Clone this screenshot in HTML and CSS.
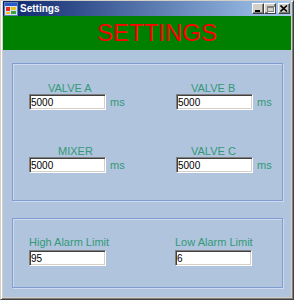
FILE: index.html
```html
<!DOCTYPE html>
<html>
<head>
<meta charset="utf-8">
<link rel="stylesheet" href="styles.css">
</head>
<body>
<div class="window">
  <div class="titlebar">
    <svg class="appicon" width="14" height="14" viewBox="0 0 14 14">
      <rect x="0.5" y="0.5" width="13" height="13" fill="#d8e4f4" stroke="#5a7fb8"/>
      <rect x="1" y="1" width="12" height="3" fill="#2a5ac8"/>
      <rect x="2" y="5" width="4" height="4" fill="#e03020"/>
      <rect x="7" y="5" width="5" height="3" fill="#f0c020"/>
      <rect x="2" y="10" width="4" height="2" fill="#f0c020"/>
      <rect x="7" y="9" width="5" height="3" fill="#40a040"/>
    </svg>
    <span class="title">Settings</span>
    <div class="caption-btns">
      <span class="cbtn"><span class="g-min"></span></span>
      <span class="cbtn"><span class="g-max"></span></span>
      <span class="cbtn cbtn-close"><svg width="8" height="7" viewBox="0 0 8 7"><path d="M0.5 0.5L7 6.5M7 0.5L0.5 6.5" stroke="#000" stroke-width="1.6"/></svg></span>
    </div>
  </div>
  <div class="banner">SETTINGS</div>
  <div class="client">
    <div class="group group-valves">
      <div class="field">
        <span class="lbl lbl-a">VALVE A</span>
        <div class="inrow"><input class="tb" value="5000"><span class="unit">ms</span></div>
      </div>
      <div class="field">
        <span class="lbl lbl-b">VALVE B</span>
        <div class="inrow"><input class="tb" value="5000"><span class="unit">ms</span></div>
      </div>
      <div class="field">
        <span class="lbl lbl-mixer">MIXER</span>
        <div class="inrow"><input class="tb" value="5000"><span class="unit">ms</span></div>
      </div>
      <div class="field">
        <span class="lbl lbl-c">VALVE C</span>
        <div class="inrow"><input class="tb" value="5000"><span class="unit">ms</span></div>
      </div>
    </div>
    <div class="group group-alarms">
      <div class="field">
        <span class="lbl lbl-alarm">High Alarm Limit</span>
        <input class="tb" value="95">
      </div>
      <div class="field">
        <span class="lbl lbl-alarm">Low Alarm Limit</span>
        <input class="tb" value="6">
      </div>
    </div>
  </div>
</div>
</body>
</html>
```

FILE: styles.css
```css
html, body {
  margin: 0;
  padding: 0;
  background: #ffffff;
}

.window {
  width: 294px;
  height: 300px;
  box-sizing: border-box;
  background: #d4d0c8;
  border: 1px solid;
  border-color: #d4d0c8 #404040 #404040 #d4d0c8;
  box-shadow: inset 1px 1px 0 #ffffff, inset -1px -1px 0 #808080;
  padding: 0 2px 2px 2px;
  display: flex;
  flex-direction: column;
  font-family: "Liberation Sans", Arial, sans-serif;
}

.titlebar {
  height: 15px;
  flex: none;
  display: flex;
  align-items: center;
  background: linear-gradient(to right, #0a246a, #a6caf0);
}

.appicon {
  margin-left: 1px;
  flex: none;
}

.title {
  margin-left: 2px;
  color: #ffffff;
  font-weight: bold;
  font-size: 10px;
  line-height: 15px;
}

.caption-btns {
  margin-left: auto;
  margin-right: 1px;
  display: flex;
  align-items: center;
}

.cbtn {
  width: 12px;
  height: 11px;
  box-sizing: border-box;
  background: #d4d0c8;
  border: 1px solid;
  border-color: #ffffff #404040 #404040 #ffffff;
  box-shadow: inset -1px -1px 0 #808080;
  display: flex;
  align-items: center;
  justify-content: center;
  position: relative;
}

.cbtn-close {
  margin-left: 2px;
}

.g-min {
  width: 5px;
  height: 2px;
  background: #000;
  margin-top: 4px;
  margin-right: 2px;
}

.g-max {
  width: 7px;
  height: 6px;
  box-sizing: border-box;
  border: 1px solid #808080;
  border-top-width: 2px;
  box-shadow: 1px 1px 0 #ffffff;
}

.banner {
  height: 34px;
  flex: none;
  background: #008000;
  color: #ff0000;
  font-size: 24px;
  line-height: 34px;
  text-align: center;
  padding-left: 20px;
}

.client {
  flex: 1;
  background: #b0c4de;
  padding: 13px 8px 0 9px;
}

.group {
  border: 1px solid #7f9dd0;
  box-shadow: 1px 1px 0 #cdd9ee, inset 1px 1px 0 #cdd9ee;
  display: grid;
}

.group-valves {
  grid-template-columns: 147px 1fr;
  row-gap: 35px;
  padding: 18px 0 27px 16px;
}

.group-alarms {
  margin-top: 17px;
  grid-template-columns: 146px 1fr;
  padding: 16px 0 21px 16px;
}

.field {
  display: flex;
  flex-direction: column;
  align-items: flex-start;
}

.lbl {
  font-size: 11px;
  line-height: 12px;
  color: #339977;
  white-space: nowrap;
}

.lbl-a { margin-left: 19px; }
.lbl-b { margin-left: 15px; }
.lbl-mixer { margin-left: 29px; }
.lbl-c { margin-left: 15px; }
.lbl-alarm { line-height: 15px; }

.inrow {
  display: flex;
  align-items: flex-end;
}

.tb {
  width: 77px;
  height: 16px;
  box-sizing: border-box;
  margin: 0;
  padding: 0 0 0 1px;
  border: 1px solid;
  border-color: #808080 #ffffff #ffffff #808080;
  box-shadow: inset 1px 1px 0 #404040, inset -1px -1px 0 #d4d0c8;
  background: #ffffff;
  font-family: "Liberation Sans", Arial, sans-serif;
  font-size: 10px;
  color: #000;
  outline: none;
}

.unit {
  margin-left: 4px;
  margin-bottom: 1px;
  font-size: 11px;
  line-height: 14px;
  color: #339977;
}
```
